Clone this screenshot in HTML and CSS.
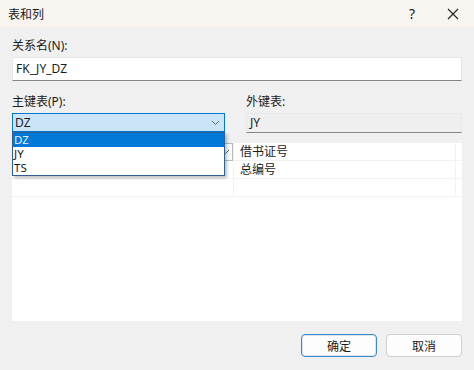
FILE: index.html
```html
<!DOCTYPE html>
<html lang="zh-CN">
<head>
    <meta charset="UTF-8">
    <title>表和列</title>
    <link rel="stylesheet" href="styles.css">
</head>
<body>
    <div class="window">
        <div class="titlebar">
            <div class="title">表和列</div>
            <div class="help">?</div>
            <div class="close">
                <svg width="12" height="12" viewBox="0 0 12 12">
                    <path d="M1 1 L11 11 M11 1 L1 11" stroke="#222" stroke-width="1.1" fill="none"/>
                </svg>
            </div>
        </div>

        <div class="content">
            <div class="label">关系名(N):</div>
            <div class="textbox">FK_JY_DZ</div>

            <div class="tables">
                <div class="col">
                    <div class="label">主键表(P):</div>
                    <div class="combo active">
                        <span>DZ</span>
                        <svg class="chev" width="9" height="6" viewBox="0 0 9 6">
                            <path d="M1 1 L4.5 4.5 L8 1" stroke="#666" stroke-width="1" fill="none"/>
                        </svg>
                    </div>
                </div>
                <div class="col">
                    <div class="label">外键表:</div>
                    <div class="textbox readonly">JY</div>
                </div>
            </div>

            <div class="grid">
                <div class="row">
                    <div class="cell">
                        <div class="cell-combo">
                            <svg class="chev" width="9" height="6" viewBox="0 0 9 6">
                                <path d="M1 1 L4.5 4.5 L8 1" stroke="#666" stroke-width="1" fill="none"/>
                            </svg>
                        </div>
                    </div>
                    <div class="cell">借书证号</div>
                </div>
                <div class="row">
                    <div class="cell"></div>
                    <div class="cell">总编号</div>
                </div>
                <div class="row">
                    <div class="cell"></div>
                    <div class="cell"></div>
                </div>
            </div>

            <div class="buttons">
                <button class="btn default">确定</button>
                <button class="btn">取消</button>
            </div>
        </div>

        <!-- open list of the 主键表 combo -->
        <div class="dropdown">
            <div class="item selected">DZ</div>
            <div class="item">JY</div>
            <div class="item">TS</div>
        </div>
    </div>
</body>
</html>
```

FILE: styles.css
```css
body {
    margin: 0;
    font-family: "Noto Sans", "Noto Sans CJK SC", sans-serif;
    font-size: 12px;
    color: #1b1b1b;
}
.window {
    width: 474px;
    height: 370px;
    background: #f0f0f0;
    display: flex;
    flex-direction: column;
    position: relative;
    overflow: hidden;
}
.titlebar {
    height: 27px;
    background: #f8f5f0;
    display: flex;
    align-items: center;
    padding-left: 8px;
}
.title {
    flex: 1;
}
.help {
    width: 40px;
    text-align: center;
    font-size: 14px;
}
.close {
    width: 42px;
    display: flex;
    justify-content: center;
    align-items: center;
}
.content {
    flex: 1;
    display: flex;
    flex-direction: column;
    padding: 11px 12px 0;
}
.label {
    height: 16px;
    line-height: 16px;
}
.textbox {
    margin-top: 3px;
    height: 24px;
    box-sizing: border-box;
    background: #fff;
    border: 1px solid #e6e6e6;
    border-bottom-color: #868686;
    padding-left: 3px;
    line-height: 22px;
}
.textbox.readonly {
    height: 20px;
    line-height: 18px;
    background: #efefef;
    border-color: #e8e8e8;
    border-bottom-color: #868686;
}
.tables {
    margin-top: 13px;
    display: grid;
    grid-template-columns: 213px 216px;
    column-gap: 21px;
}
.combo {
    margin-top: 3px;
    height: 19px;
    box-sizing: border-box;
    display: flex;
    align-items: center;
    justify-content: space-between;
    padding: 0 4px 0 2px;
}
.combo.active {
    background: #cce4f7;
    border: 1px solid #0078d4;
}
.grid {
    margin-top: 10px;
    height: 178px;
    background: #fff;
}
.row {
    display: grid;
    grid-template-columns: 222px 222px;
    height: 18px;
    border-bottom: 1px solid #f2f2f2;
    box-sizing: border-box;
}
.cell {
    padding-left: 6px;
    line-height: 17px;
    border-right: 1px solid #f2f2f2;
}
.row .cell:first-child {
    padding-left: 0;
}
.cell-combo {
    height: 18px;
    box-sizing: border-box;
    border: 1px solid #b9b9b9;
    background: #fff;
    display: flex;
    align-items: center;
    justify-content: flex-end;
    padding-right: 2px;
}
.buttons {
    margin-top: 13px;
    display: flex;
    justify-content: flex-end;
    gap: 9px;
}
.btn {
    width: 76px;
    height: 23px;
    font-family: inherit;
    font-size: 12px;
    color: #1b1b1b;
    background: #fdfdfd;
    border: 1px solid #d0d0d0;
    border-radius: 4px;
}
.btn.default {
    border-color: #3f86c9;
    box-shadow: inset 0 0 0 1px #d6e6f5;
}
.dropdown {
    position: absolute;
    left: 12px;
    top: 132px;
    width: 213px;
    box-sizing: border-box;
    background: #fff;
    border: 1px solid #2f5f94;
    box-shadow: 2px 2px 3px rgba(0, 0, 0, 0.25);
}
.item {
    height: 14px;
    line-height: 14px;
    font-size: 11.5px;
    padding-left: 1px;
    overflow: hidden;
}
.item.selected {
    background: #0078d7;
    color: #e6f1fb;
}
```
